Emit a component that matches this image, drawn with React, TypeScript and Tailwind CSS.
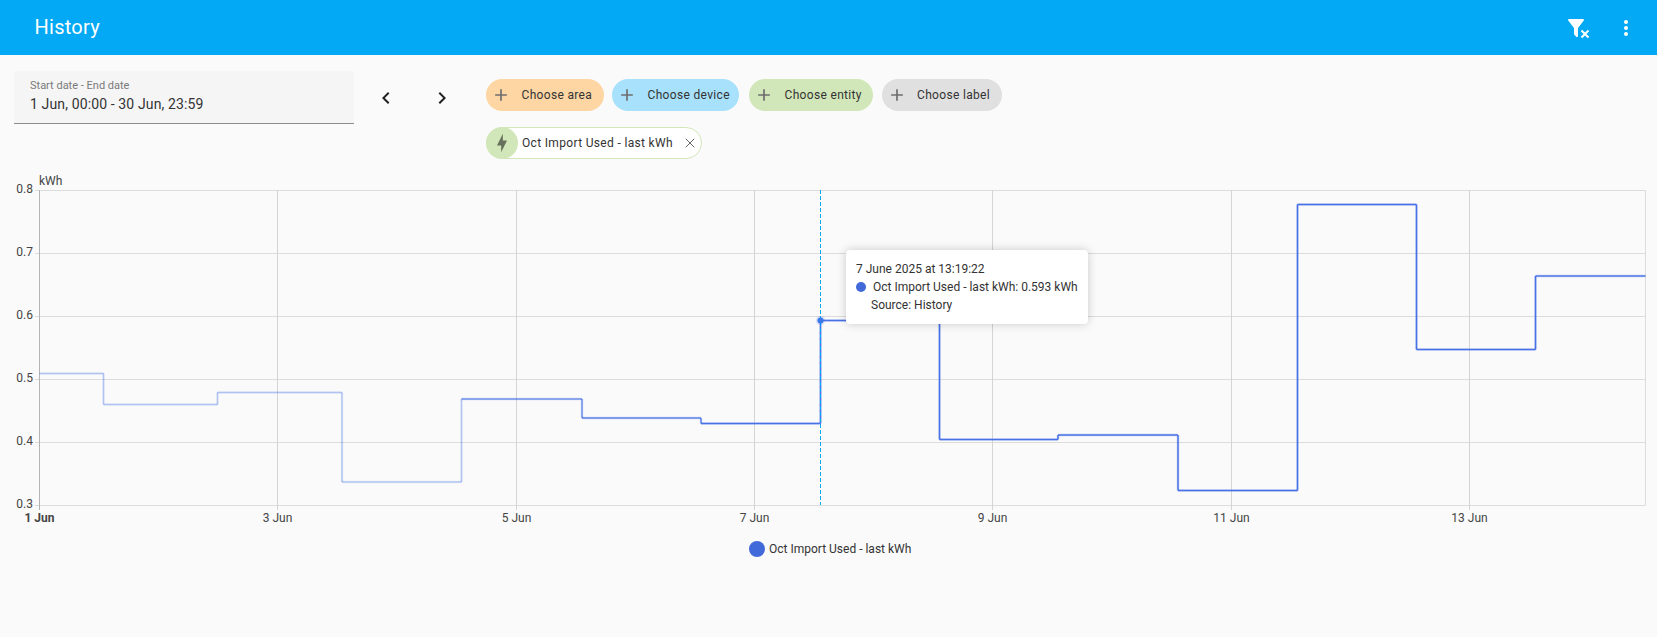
import { X } from 'lucide-react';

const chips = [
  { label: 'Choose area', box: 'w-[118px] mr-[8px] bg-[#fed6a4]' },
  { label: 'Choose device', box: 'w-[127px] mr-[10px] bg-[#a8e1fc]' },
  { label: 'Choose entity', box: 'w-[124px] mr-[8.5px] bg-[#d2e7b9]' },
  { label: 'Choose label', box: 'w-[120px] bg-[#e0e0e0]' },
];

const yTicks = [
  { label: '0.8', y: 190.5 },
  { label: '0.7', y: 253.5 },
  { label: '0.6', y: 316.5 },
  { label: '0.5', y: 379.5 },
  { label: '0.4', y: 442.5 },
  { label: '0.3', y: 505.5 },
];

const xTicks = [
  { label: '1 Jun', x: 39.5 },
  { label: '3 Jun', x: 277.5 },
  { label: '5 Jun', x: 516.5 },
  { label: '7 Jun', x: 754.5 },
  { label: '9 Jun', x: 992.5 },
  { label: '11 Jun', x: 1231.5 },
  { label: '13 Jun', x: 1469.5 },
];

// x1, x2, y of each step plus how faded that stretch of the line is
const steps = [
  { from: 39.5, to: 103.5, y: 373.5, opacity: 0.34 },
  { from: 103.5, to: 217.5, y: 404.5, opacity: 0.34 },
  { from: 217.5, to: 342, y: 392.5, opacity: 0.34 },
  { from: 342, to: 461.5, y: 482, opacity: 0.34 },
  { from: 461.5, to: 582, y: 399, opacity: 0.72 },
  { from: 582, to: 701, y: 418, opacity: 0.8 },
  { from: 701, to: 820.5, y: 423.5, opacity: 0.95 },
  { from: 820.5, to: 939.5, y: 320.5, opacity: 0.95 },
  { from: 939.5, to: 1058, y: 439.5, opacity: 0.95 },
  { from: 1058, to: 1178, y: 435, opacity: 0.95 },
  { from: 1178, to: 1297.5, y: 490.5, opacity: 0.95 },
  { from: 1297.5, to: 1416.5, y: 204.5, opacity: 0.95 },
  { from: 1416.5, to: 1535.5, y: 349.5, opacity: 0.95 },
  { from: 1535.5, to: 1645.5, y: 276, opacity: 0.9 },
];

function Mdi({ d, className }: { d: string; className: string }) {
  return (
    <svg viewBox="0 0 24 24" className={className} fill="currentColor">
      <path d={d} />
    </svg>
  );
}

const plusPath = 'M19,13H13V19H11V13H5V11H11V5H13V11H19V13Z';

function Chart() {
  return (
    <svg viewBox="0 170 1657 360" className="block h-[360px] w-[1657px]">
      {yTicks.map((tick) => (
        <g key={tick.label}>
          <line x1={35} x2={1645.5} y1={tick.y} y2={tick.y} stroke="#dcdcdc" />
          <text x={33} y={tick.y + 2} textAnchor="end" fontSize={12} fill="#444">
            {tick.label}
          </text>
        </g>
      ))}
      {xTicks.map((tick, index) => (
        <g key={tick.label}>
          <line x1={tick.x} x2={tick.x} y1={190} y2={510} stroke={index === 0 ? '#b4b4b4' : '#d4d4d4'} />
          <text x={tick.x} y={522} textAnchor="middle" fontSize={12} fontWeight={index === 0 ? 700 : 400} fill="#444">
            {tick.label}
          </text>
        </g>
      ))}
      <line x1={1645.5} x2={1645.5} y1={190} y2={505.5} stroke="#dcdcdc" />
      <text x={39} y={185} fontSize={12} fill="#444">
        kWh
      </text>

      {steps.map((step, index) => {
        const next = steps[index + 1];
        const segment = (
          <>
            <line x1={step.from} x2={step.to} y1={step.y} y2={step.y} />
            {next ? <line x1={step.to} x2={step.to} y1={step.y} y2={next.y} /> : null}
          </>
        );
        return (
          <g key={step.from} stroke="#3f69e6" fill="none">
            <g strokeWidth={3} strokeOpacity={step.opacity * 0.16}>{segment}</g>
            <g strokeWidth={1.5} strokeOpacity={step.opacity}>{segment}</g>
          </g>
        );
      })}

      <line x1={820.5} x2={820.5} y1={190} y2={505} stroke="#03a9f4" strokeDasharray="4 2" />
      <circle cx={820.5} cy={320.5} r={4.5} fill="#3f69e6" fillOpacity={0.2} />
      <circle cx={820.5} cy={320.5} r={3} fill="#3a78ea" />
    </svg>
  );
}

export default function App() {
  return (
    <div className="h-[637px] w-full overflow-hidden bg-[#fafafa] font-['Roboto',sans-serif] text-[#212121]">
      <header className="flex h-[55px] items-center bg-[#03a9f4] text-white">
        <h1 className="mb-[2px] ml-[34.5px] flex-1 text-[20px] font-normal tracking-[0.25px]">History</h1>
        <Mdi
          className="mr-[24px] size-6"
          d="M14.76,20.83L17.6,18L14.76,15.17L16.17,13.76L19,16.57L21.83,13.76L23.24,15.17L20.41,18L23.24,20.83L21.83,22.24L19,19.4L16.17,22.24L14.76,20.83M12,12V19.88C12.04,20.18 11.94,20.5 11.71,20.71C11.32,21.1 10.69,21.1 10.3,20.71L8.29,18.7C8.06,18.47 7.96,18.16 8,17.87V12H7.97L2.21,4.62C1.87,4.19 1.95,3.56 2.38,3.22C2.57,3.08 2.78,3 3,3V3H17V3C17.22,3 17.43,3.08 17.62,3.22C18.05,3.56 18.13,4.19 17.79,4.62L12.03,12H12Z"
        />
        <Mdi
          className="mr-[19px] size-6"
          d="M12,16A2,2 0 0,1 14,18A2,2 0 0,1 12,20A2,2 0 0,1 10,18A2,2 0 0,1 12,16M12,10A2,2 0 0,1 14,12A2,2 0 0,1 12,14A2,2 0 0,1 10,12A2,2 0 0,1 12,10M12,4A2,2 0 0,1 14,6A2,2 0 0,1 12,8A2,2 0 0,1 10,6A2,2 0 0,1 12,4Z"
        />
      </header>

      <div className="flex h-[115px] items-start pl-[14px] pt-4">
        <div className="h-[53px] w-[340px] shrink-0 rounded-t border-b border-[#8c8c8c] bg-[#f5f5f5] pl-[16px] pt-[8px]">
          <div className="text-[11px] leading-[13px] text-[#7a7a7a]">Start date - End date</div>
          <div className="mt-[2px] text-[14px] leading-[20px] tracking-[0.13px] text-[#333]">1 Jun, 00:00 - 30 Jun, 23:59</div>
        </div>
        <div className="ml-2 flex shrink-0 items-center pt-[3px]">
          <button className="flex size-12 items-center justify-center">
            <Mdi className="size-6" d="M15.41,16.58L10.83,12L15.41,7.41L14,6L8,12L14,18L15.41,16.58Z" />
          </button>
          <button className="ml-2 flex size-12 items-center justify-center">
            <Mdi className="size-6" d="M8.59,16.58L13.17,12L8.59,7.41L10,6L16,12L10,18L8.59,16.58Z" />
          </button>
        </div>
        <div className="ml-5 pt-2">
          <div className="flex">
            {chips.map((chip) => (
              <div key={chip.label} className={`flex h-8 items-center rounded-full pl-[5px] ${chip.box}`}>
                <Mdi className="size-5 text-[#6d6d6d]" d={plusPath} />
                <span className="ml-[10.5px] whitespace-nowrap text-[12px] tracking-[0.33px] text-[#333]">{chip.label}</span>
              </div>
            ))}
          </div>
          <div className="relative mt-4 flex h-8 w-[216px] items-center rounded-full border border-[#d2e7b9] bg-white pl-[35px]">
            <div className="absolute -left-px -top-px flex size-8 items-center justify-center rounded-full bg-[#d2e7b9]">
              <Mdi className="size-5 text-[#66705c]" d="M11 15H6L13 1V9H18L11 23V15Z" />
            </div>
            <span className="whitespace-nowrap text-[12px] tracking-[0.33px] text-[#333]">Oct Import Used - last kWh</span>
            <X className="ml-[9px] size-4 text-[#666]" strokeWidth={1.5} />
          </div>
        </div>
      </div>

      <div className="relative">
        <Chart />
        <div className="absolute left-[846px] top-[80px] h-[74px] w-[242px] rounded bg-white py-[10px] pl-[10px] text-[12px] leading-[18px] text-[#333] shadow-[0_0_10px_rgba(0,0,0,0.2)]">
          <div>7 June 2025 at 13:19:22</div>
          <div className="flex items-center">
            <span className="mr-[7px] size-2.5 rounded-full bg-[#4169d9]" />
            Oct Import Used - last kWh: 0.593 kWh
          </div>
          <div className="pl-[15px]">Source: History</div>
        </div>
      </div>

      <div className="mt-[11px] flex items-center pl-[749px] text-[12px] leading-4 text-[#333]">
        <span className="mr-[4px] size-4 rounded-full bg-[#4169d9]" />
        Oct Import Used - last kWh
      </div>
    </div>
  );
}
